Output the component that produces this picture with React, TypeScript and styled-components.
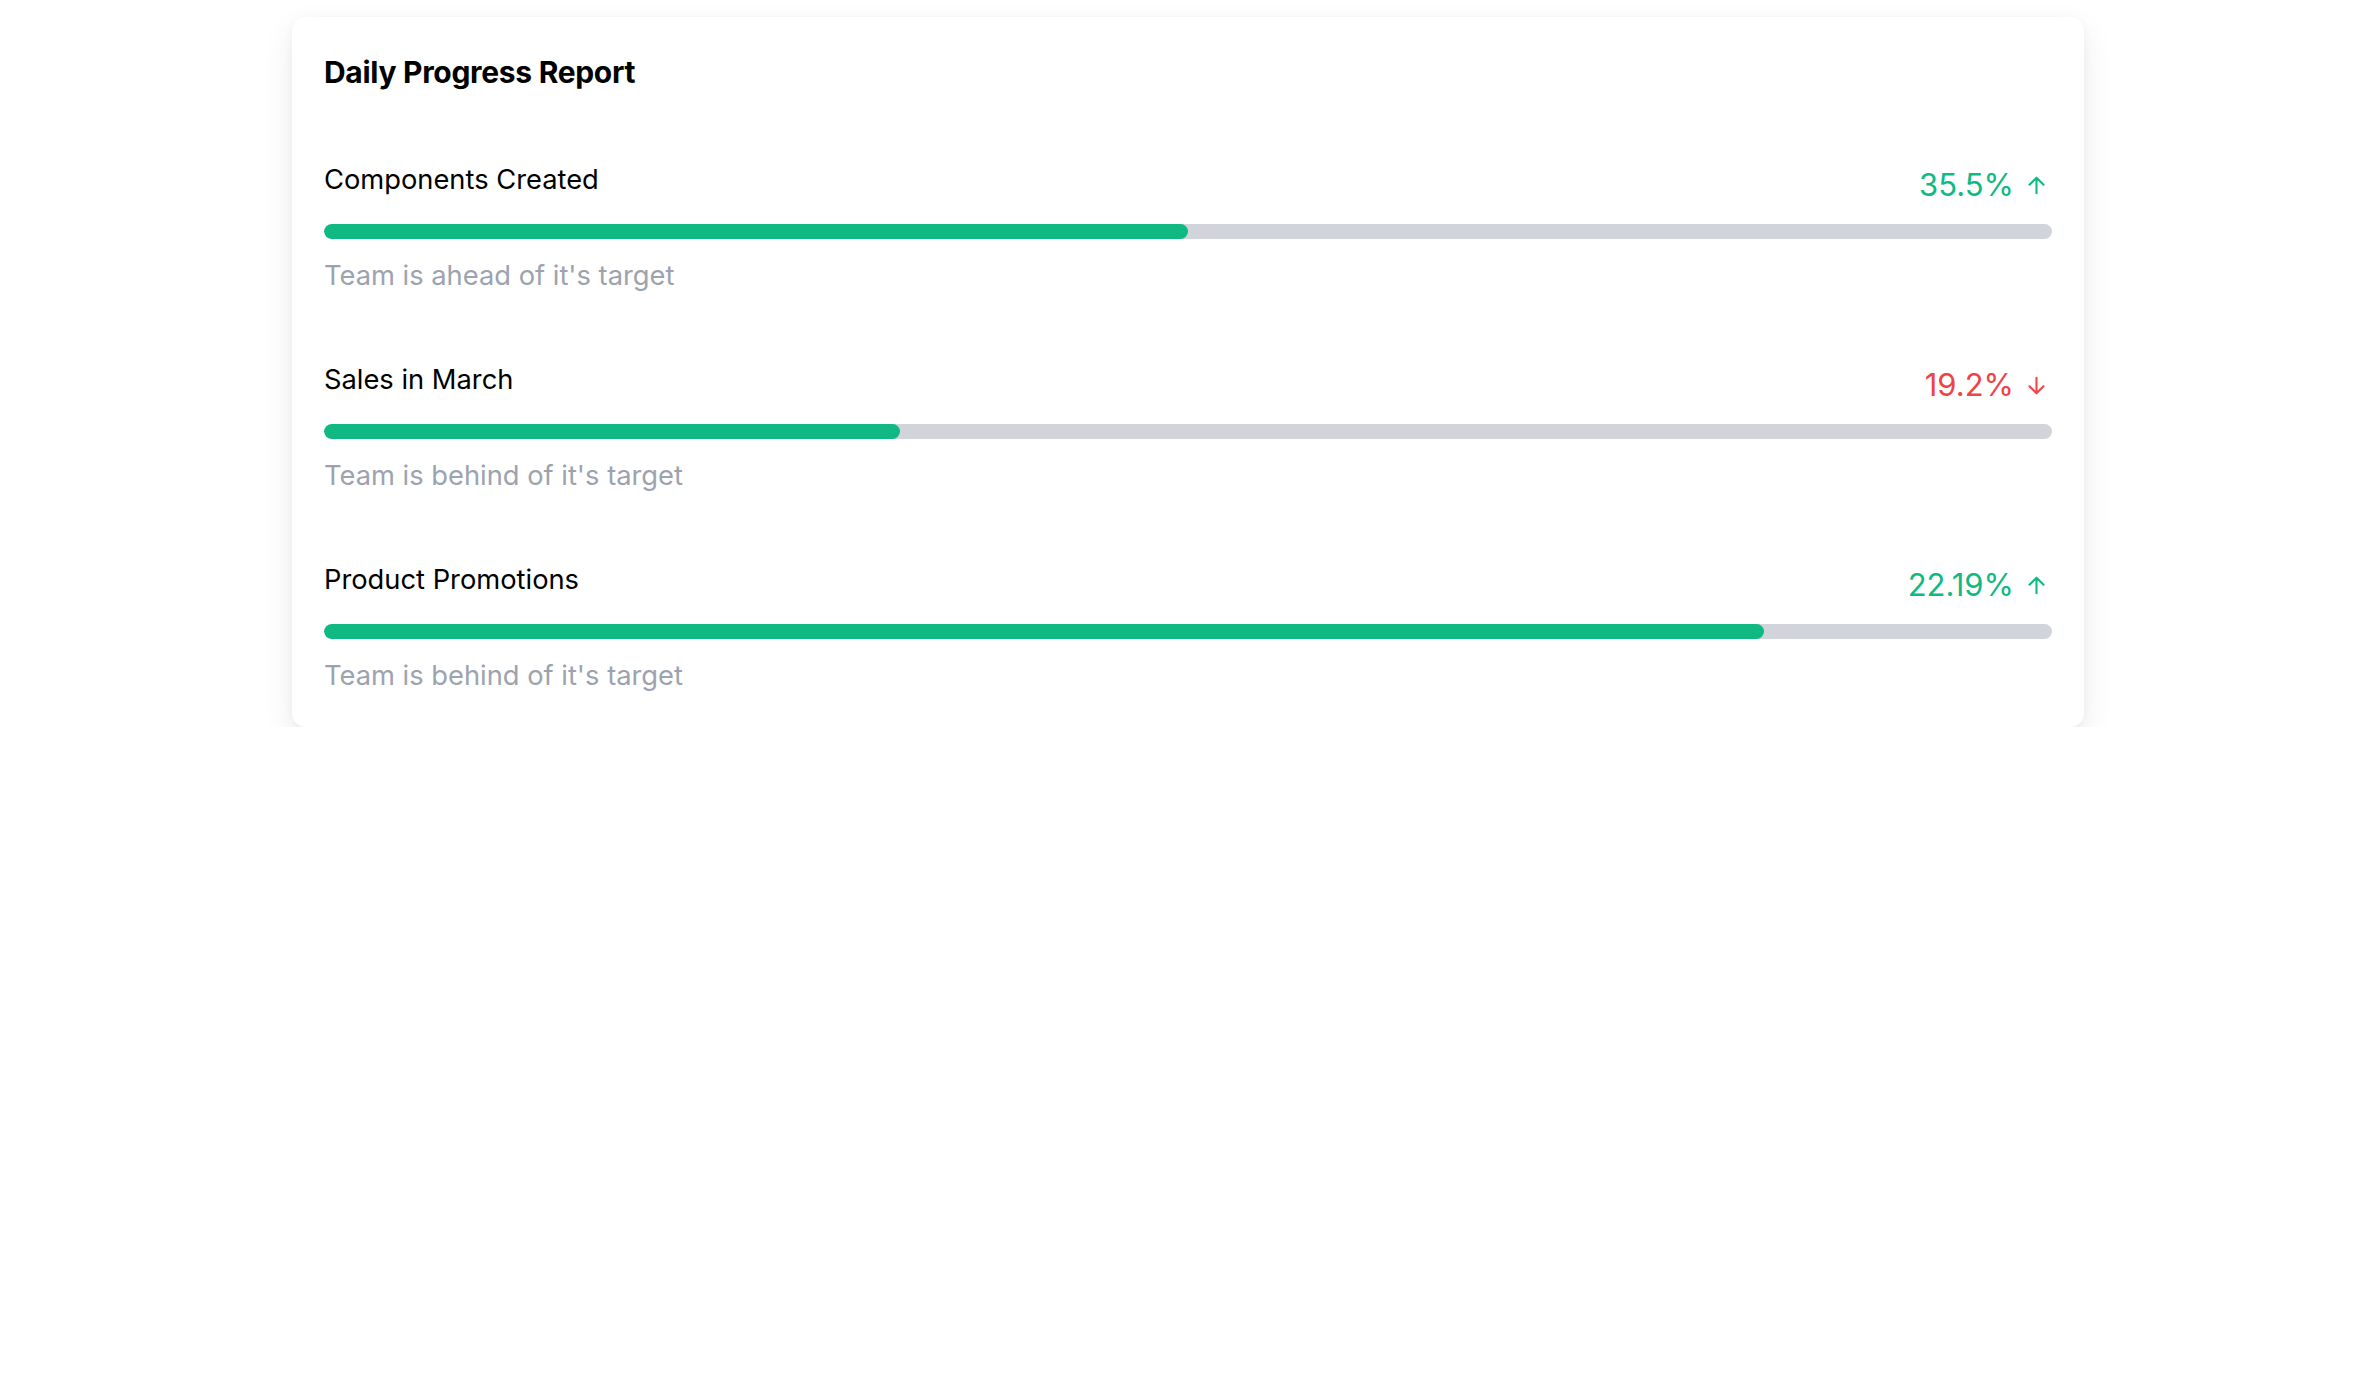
import React from 'react';
import styled, { createGlobalStyle } from 'styled-components';

const GlobalStyle = createGlobalStyle`
  body {
    margin: 0;
    background: #ffffff;
    font-family: Inter, "Noto Sans", "Liberation Sans", sans-serif;
    color: #000;
  }
`;

const Page = styled.div`
  display: flex;
  justify-content: center;
  padding-top: 17px;
`;

const Card = styled.section`
  width: 1792px;
  box-sizing: border-box;
  padding: 35px 32px 31px 32px;
  background: #fff;
  border-radius: 14px;
  box-shadow: 0 12px 32px rgba(0, 0, 0, 0.08), 0 2px 10px rgba(0, 0, 0, 0.04);
`;

const Title = styled.h2`
  margin: 0 0 68px;
  font-size: 30px;
  line-height: 40px;
  font-weight: 700;
  letter-spacing: -0.3px;
`;

const List = styled.div`
  display: flex;
  flex-direction: column;
  gap: 64px;
`;

const Row = styled.div`
  display: flex;
  flex-direction: column;
`;

const Header = styled.div`
  display: flex;
  justify-content: space-between;
  align-items: flex-start;
  height: 44px;
`;

const Label = styled.span`
  font-size: 27.3px;
  line-height: 40px;
  font-weight: 400;
`;

const Trend = styled.div<{ $up: boolean }>`
  display: flex;
  align-items: center;
  gap: 10px;
  padding-right: 3px;
  margin-top: 5px;
  color: ${(p) => (p.$up ? '#10b981' : '#ef4444')};
`;

const Percent = styled.span`
  font-size: 31px;
  line-height: 40px;
`;

const Track = styled.div`
  margin-top: 20px;
  height: 15px;
  border-radius: 999px;
  background: #d1d5db;
  overflow: hidden;
`;

const Fill = styled.div`
  height: 100%;
  border-radius: 999px;
  background: #10b981;
`;

const Note = styled.p`
  margin: 17px 0 0;
  font-size: 27.3px;
  line-height: 40px;
  color: #9ca3af;
`;

const Arrow = ({ up }: { up: boolean }) => (
  <svg width="25" height="25" viewBox="0 0 24 24" fill="none" stroke="currentColor" strokeWidth="2" strokeLinecap="round" strokeLinejoin="round">
    {up ? (
      <path d="M12 19.5v-15m0 0l-6.75 6.75M12 4.5l6.75 6.75" />
    ) : (
      <path d="M12 4.5v15m0 0l6.75-6.75M12 19.5l-6.75-6.75" />
    )}
  </svg>
);

type Metric = {
  name: string;
  value: string;
  up: boolean;
  progress: number;
  note: string;
};

const metrics: Metric[] = [
  { name: 'Components Created', value: '35.5%', up: true, progress: 50, note: "Team is ahead of it's target" },
  { name: 'Sales in March', value: '19.2%', up: false, progress: 33.33, note: "Team is behind of it's target" },
  { name: 'Product Promotions', value: '22.19%', up: true, progress: 83.33, note: "Team is behind of it's target" },
];

function App() {
  return (
    <>
      <GlobalStyle />
      <Page>
        <Card>
          <Title>Daily Progress Report</Title>
          <List>
            {metrics.map((m) => (
              <Row key={m.name}>
                <Header>
                  <Label>{m.name}</Label>
                  <Trend $up={m.up}>
                    <Percent>{m.value}</Percent>
                    <Arrow up={m.up} />
                  </Trend>
                </Header>
                <Track>
                  <Fill style={{ width: `${m.progress}%` }} />
                </Track>
                <Note>{m.note}</Note>
              </Row>
            ))}
          </List>
        </Card>
      </Page>
    </>
  );
}

export default App;
